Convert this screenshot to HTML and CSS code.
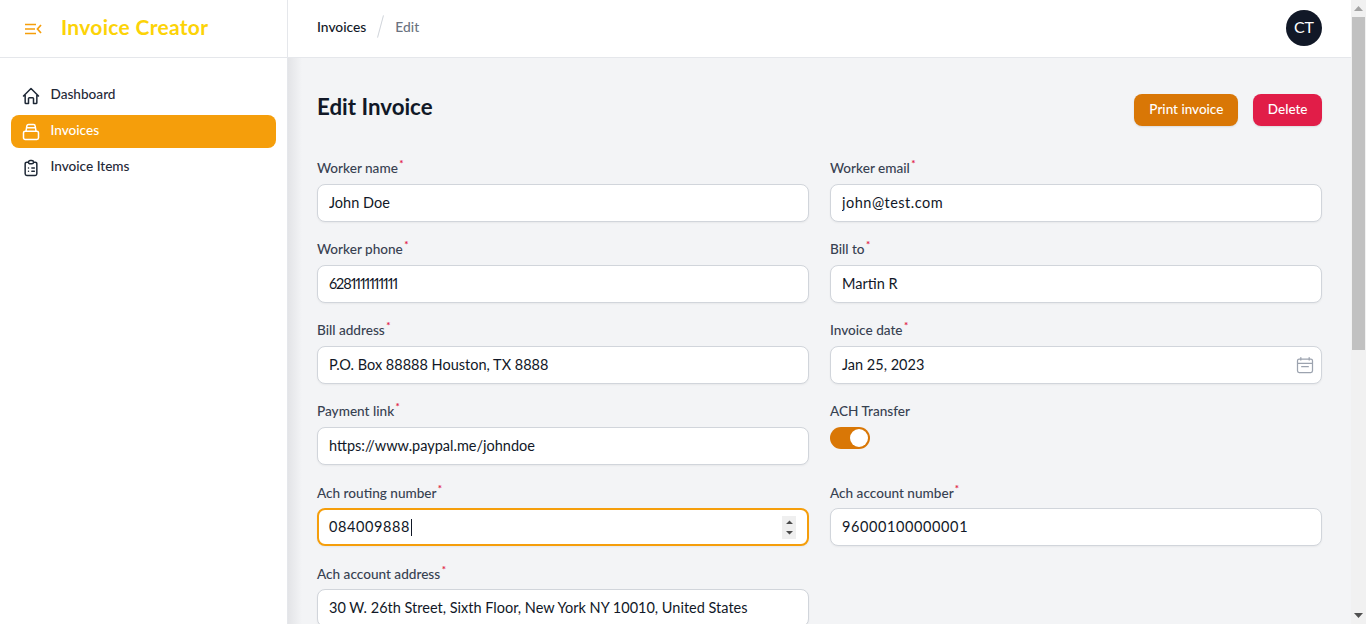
FILE: index.html
```html
<!DOCTYPE html>
<html lang="en">
<head>
<meta charset="utf-8">
<title>Edit Invoice</title>
<link rel="stylesheet" href="styles.css">
</head>
<body>
<div class="layout">
  <aside class="sidebar">
    <div class="brand">
      <svg class="brand-icon" viewBox="0 0 18 12" fill="none" stroke="#f59e0b" stroke-width="1.700"><path d="M1 1.500h11M1 6h10M1 10.500h11M17 2 13.500 6l3.500 4"/></svg>
      <span class="brand-name">Invoice Creator</span>
    </div>
    <nav class="nav">
      <a class="nav-item">
        <svg class="nav-icon" viewBox="0 0 24 24" fill="none" stroke="currentColor" stroke-width="1.800" stroke-linecap="round" stroke-linejoin="round"><path d="M3 12l9-9 9 9M5 10v10a1 1 0 0 0 1 1h3v-6a1 1 0 0 1 1-1h4a1 1 0 0 1 1 1v6h3a1 1 0 0 0 1-1V10"/></svg>
        <span class="nav-text">Dashboard</span>
      </a>
      <a class="nav-item active">
        <svg class="nav-icon" viewBox="0 0 24 24" fill="none" stroke="currentColor" stroke-width="1.800" stroke-linecap="round" stroke-linejoin="round"><path d="M6 11l1-6a2 2 0 0 1 2-2h6a2 2 0 0 1 2 2l1 6M7 7h10M5 11h14a2 2 0 0 1 2 2v6a2 2 0 0 1-2 2H5a2 2 0 0 1-2-2v-6a2 2 0 0 1 2-2z"/></svg>
        <span class="nav-text">Invoices</span>
      </a>
      <a class="nav-item">
        <svg class="nav-icon" viewBox="0 0 24 24" fill="none" stroke="currentColor" stroke-width="1.800" stroke-linecap="round" stroke-linejoin="round"><path d="M9 5H7a2 2 0 0 0-2 2v12a2 2 0 0 0 2 2h10a2 2 0 0 0 2-2V7a2 2 0 0 0-2-2h-2M9 5a2 2 0 0 0 2 2h2a2 2 0 0 0 2-2M9 5a2 2 0 0 1 2-2h2a2 2 0 0 1 2 2M9 12h.01M13 12h3M9 16h.01M13 16h3"/></svg>
        <span class="nav-text">Invoice Items</span>
      </a>
    </nav>
  </aside>
  <div class="main">
    <header class="topbar">
      <div class="crumbs">
        <a class="crumb">Invoices</a>
        <span class="crumb-sep"></span>
        <span class="crumb-current">Edit</span>
      </div>
      <div class="avatar">CT</div>
    </header>
    <main class="content">
      <div class="page-head">
        <h1 class="title">Edit Invoice</h1>
        <div class="actions">
          <button class="btn btn-print">Print invoice</button>
          <button class="btn btn-delete">Delete</button>
        </div>
      </div>
      <form class="form">
        <div class="field"><label class="label">Worker name <sup class="req">*</sup></label><input class="input" value="John Doe"></div>
        <div class="field"><label class="label">Worker email <sup class="req">*</sup></label><input class="input wide" value="john@test.com"></div>
        <div class="field"><label class="label">Worker phone <sup class="req">*</sup></label><input class="input prop" value="6281111111111"></div>
        <div class="field"><label class="label">Bill to <sup class="req">*</sup></label><input class="input" value="Martin R"></div>
        <div class="field"><label class="label">Bill address <sup class="req">*</sup></label><input class="input" value="P.O. Box 88888 Houston, TX 8888"></div>
        <div class="field"><label class="label">Invoice date <sup class="req">*</sup></label>
          <div class="input date"><span>Jan 25, 2023</span>
            <svg class="cal" viewBox="0 0 24 24" fill="none" stroke="#9ca3af" stroke-width="1.500" stroke-linecap="round" stroke-linejoin="round"><path d="M7 3v3M17 3v3M5 5h14a2 2 0 0 1 2 2v12a2 2 0 0 1-2 2H5a2 2 0 0 1-2-2v-6V7a2 2 0 0 1 2-2zM3 10h18M8 14h8"/></svg>
          </div>
        </div>
        <div class="field"><label class="label">Payment link <sup class="req">*</sup></label><input class="input" value="https://www.paypal.me/johndoe"></div>
        <div class="field"><span class="label">ACH Transfer</span><div class="toggle"><span class="knob"></span></div></div>
        <div class="field"><label class="label low">Ach routing number <sup class="req">*</sup></label>
          <div class="input focused"><span class="digits">084009888</span><span class="caret"></span>
            <span class="spin"><svg class="spin-icon" viewBox="0 0 7 16" fill="#4b4b4b"><path d="M3.500 1.500 7 5H0zM3.500 15.500 0 12h7z"/></svg></span>
          </div>
        </div>
        <div class="field"><label class="label low">Ach account number <sup class="req">*</sup></label><input class="input digits" value="96000100000001"></div>
        <div class="field"><label class="label low">Ach account address <sup class="req">*</sup></label><input class="input" value="30 W. 26th Street, Sixth Floor, New York NY 10010, United States"></div>
      </form>
    </main>
  </div>
  <div class="scrollbar">
    <span class="sb-btn"><svg class="sb-arrow" viewBox="0 0 9 5" fill="#a3a3a3"><path d="M4.500 0 9 5H0z"/></svg></span>
    <span class="sb-track"><span class="sb-thumb"></span></span>
    <span class="sb-btn"><svg class="sb-arrow" viewBox="0 0 9 5" fill="#505050"><path d="M0 0h9L4.500 5z"/></svg></span>
  </div>
</div>
</body>
</html>
```
FILE: styles.css
```css
* { box-sizing: border-box; }
html, body { margin: 0; }
body { font-family: "Lato", "Open Sans", sans-serif; color: #111827; background: #f3f4f6; }
.layout { display: flex; align-items: flex-start; min-height: 1105px; }
.sidebar { width: 288px; flex: none; align-self: stretch; background: #fff; border-right: 1px solid #e5e7eb; }
.brand { height: 58px; display: flex; align-items: center; padding-left: 24px; gap: 19px; border-bottom: 1px solid #e5e7eb; }
.brand-icon { width: 18px; height: 12px; }
.brand-name { font-size: 21px; font-weight: 700; color: #fcd307; letter-spacing: .3px; padding-bottom: 5px; }
.nav { padding: 21px 11px 0 11px; display: flex; flex-direction: column; gap: 3px; }
.nav-item { height: 33px; display: flex; align-items: center; gap: 9.500px; padding-left: 10px; border-radius: 8px; font-size: 13.600px; font-weight: 500; color: #1f2937; }
.nav-item.active { background: #f59e0b; color: #fff; }
.nav-icon { width: 20px; height: 20px; flex: none; }
.nav-text { padding-bottom: 3px; }
.main { flex: 1; min-width: 0; align-self: stretch; }
.topbar { height: 58px; background: #fff; border-bottom: 1px solid #e5e7eb; display: flex; align-items: center; justify-content: space-between; padding: 0 29px; }
.crumbs { display: flex; align-items: center; font-size: 13.800px; font-weight: 500; padding-bottom: 4px; }
.crumb { color: #111827; }
.crumb-sep { width: 1px; height: 23px; background: #d1d5db; transform: rotate(15deg); margin: 0 14px; }
.crumb-current { color: #6b7280; }
.avatar { width: 36px; height: 36px; border-radius: 50%; background: #111827; color: #fff; display: flex; align-items: center; justify-content: center; font-size: 16px; padding-bottom: 3px; margin-bottom: 2px; }
.content { padding: 36px 29px 0; background: linear-gradient(to right, #e3e4e7, #f3f4f6 14px); min-height: 1047px; }
.page-head { display: flex; align-items: flex-start; justify-content: space-between; height: 32px; }
.title { margin: 0; font-size: 22.300px; line-height: 26px; font-weight: 700; }
.actions { display: flex; gap: 15px; }
.btn { height: 32px; padding: 0 15px 3px; border: 0; border-radius: 8px; color: #fff; font: 500 13.500px "Lato", sans-serif; box-shadow: 0 1px 2px rgba(0,0,0,.1); }
.btn-print { background: #d97706; }
.btn-delete { background: #e11d48; padding: 0 14.500px 3px; }
.form { margin-top: 32px; display: grid; grid-template-columns: 492px 492px; column-gap: 21px; grid-auto-rows: 64px; row-gap: 17px; }
.field { display: flex; flex-direction: column; gap: 6px; }
.label { height: 20px; line-height: 20px; font-size: 13.600px; font-weight: 500; color: #374151; }
.low { line-height: 22px; }
.req { color: #e11d48; font-size: 10px; line-height: 0; font-weight: 700; margin-left: -2px; }
.input { height: 38px; width: 100%; background: #fff; border: 1px solid #d1d5db; border-radius: 8px; padding: 0 11px 2px; font: 400 14.500px "Lato", sans-serif; color: #111827; box-shadow: 0 1px 2px rgba(0,0,0,.05); outline: 0; display: block; }
.prop { font-variant-numeric: proportional-nums; letter-spacing: -1.100px; }
.digits { letter-spacing: .6px; }
.wide { letter-spacing: .5px; }
.date { display: flex; align-items: center; justify-content: space-between; }
.focused { border: 2px solid #f59e0b; padding: 0 10px; display: flex; align-items: center; }
.caret { width: 1px; height: 17px; background: #111827; margin-left: 1px; }
.spin { margin-left: auto; margin-right: 1px; width: 14px; height: 23px; background: #efefef; display: flex; align-items: center; justify-content: center; }
.spin-icon { width: 7px; height: 16px; }
.focused .digits { padding-bottom: 2px; }
.cal { width: 20px; height: 20px; margin-right: -5px; margin-bottom: -2px; }
.toggle { width: 40px; height: 22px; border-radius: 11px; background: #d97706; padding: 2px; display: flex; justify-content: flex-end; }
.knob { width: 18px; height: 18px; border-radius: 50%; background: #fff; }
.scrollbar { width: 15px; height: 624px; flex: none; background: #f1f1f1; display: flex; flex-direction: column; position: sticky; top: 0; }
.sb-btn { height: 17px; flex: none; display: flex; align-items: center; justify-content: center; }
.sb-arrow { width: 9px; height: 5px; }
.sb-track { flex: 1; padding: 0 1px; }
.sb-thumb { display: block; height: 333px; background: #c1c1c1; }
```
